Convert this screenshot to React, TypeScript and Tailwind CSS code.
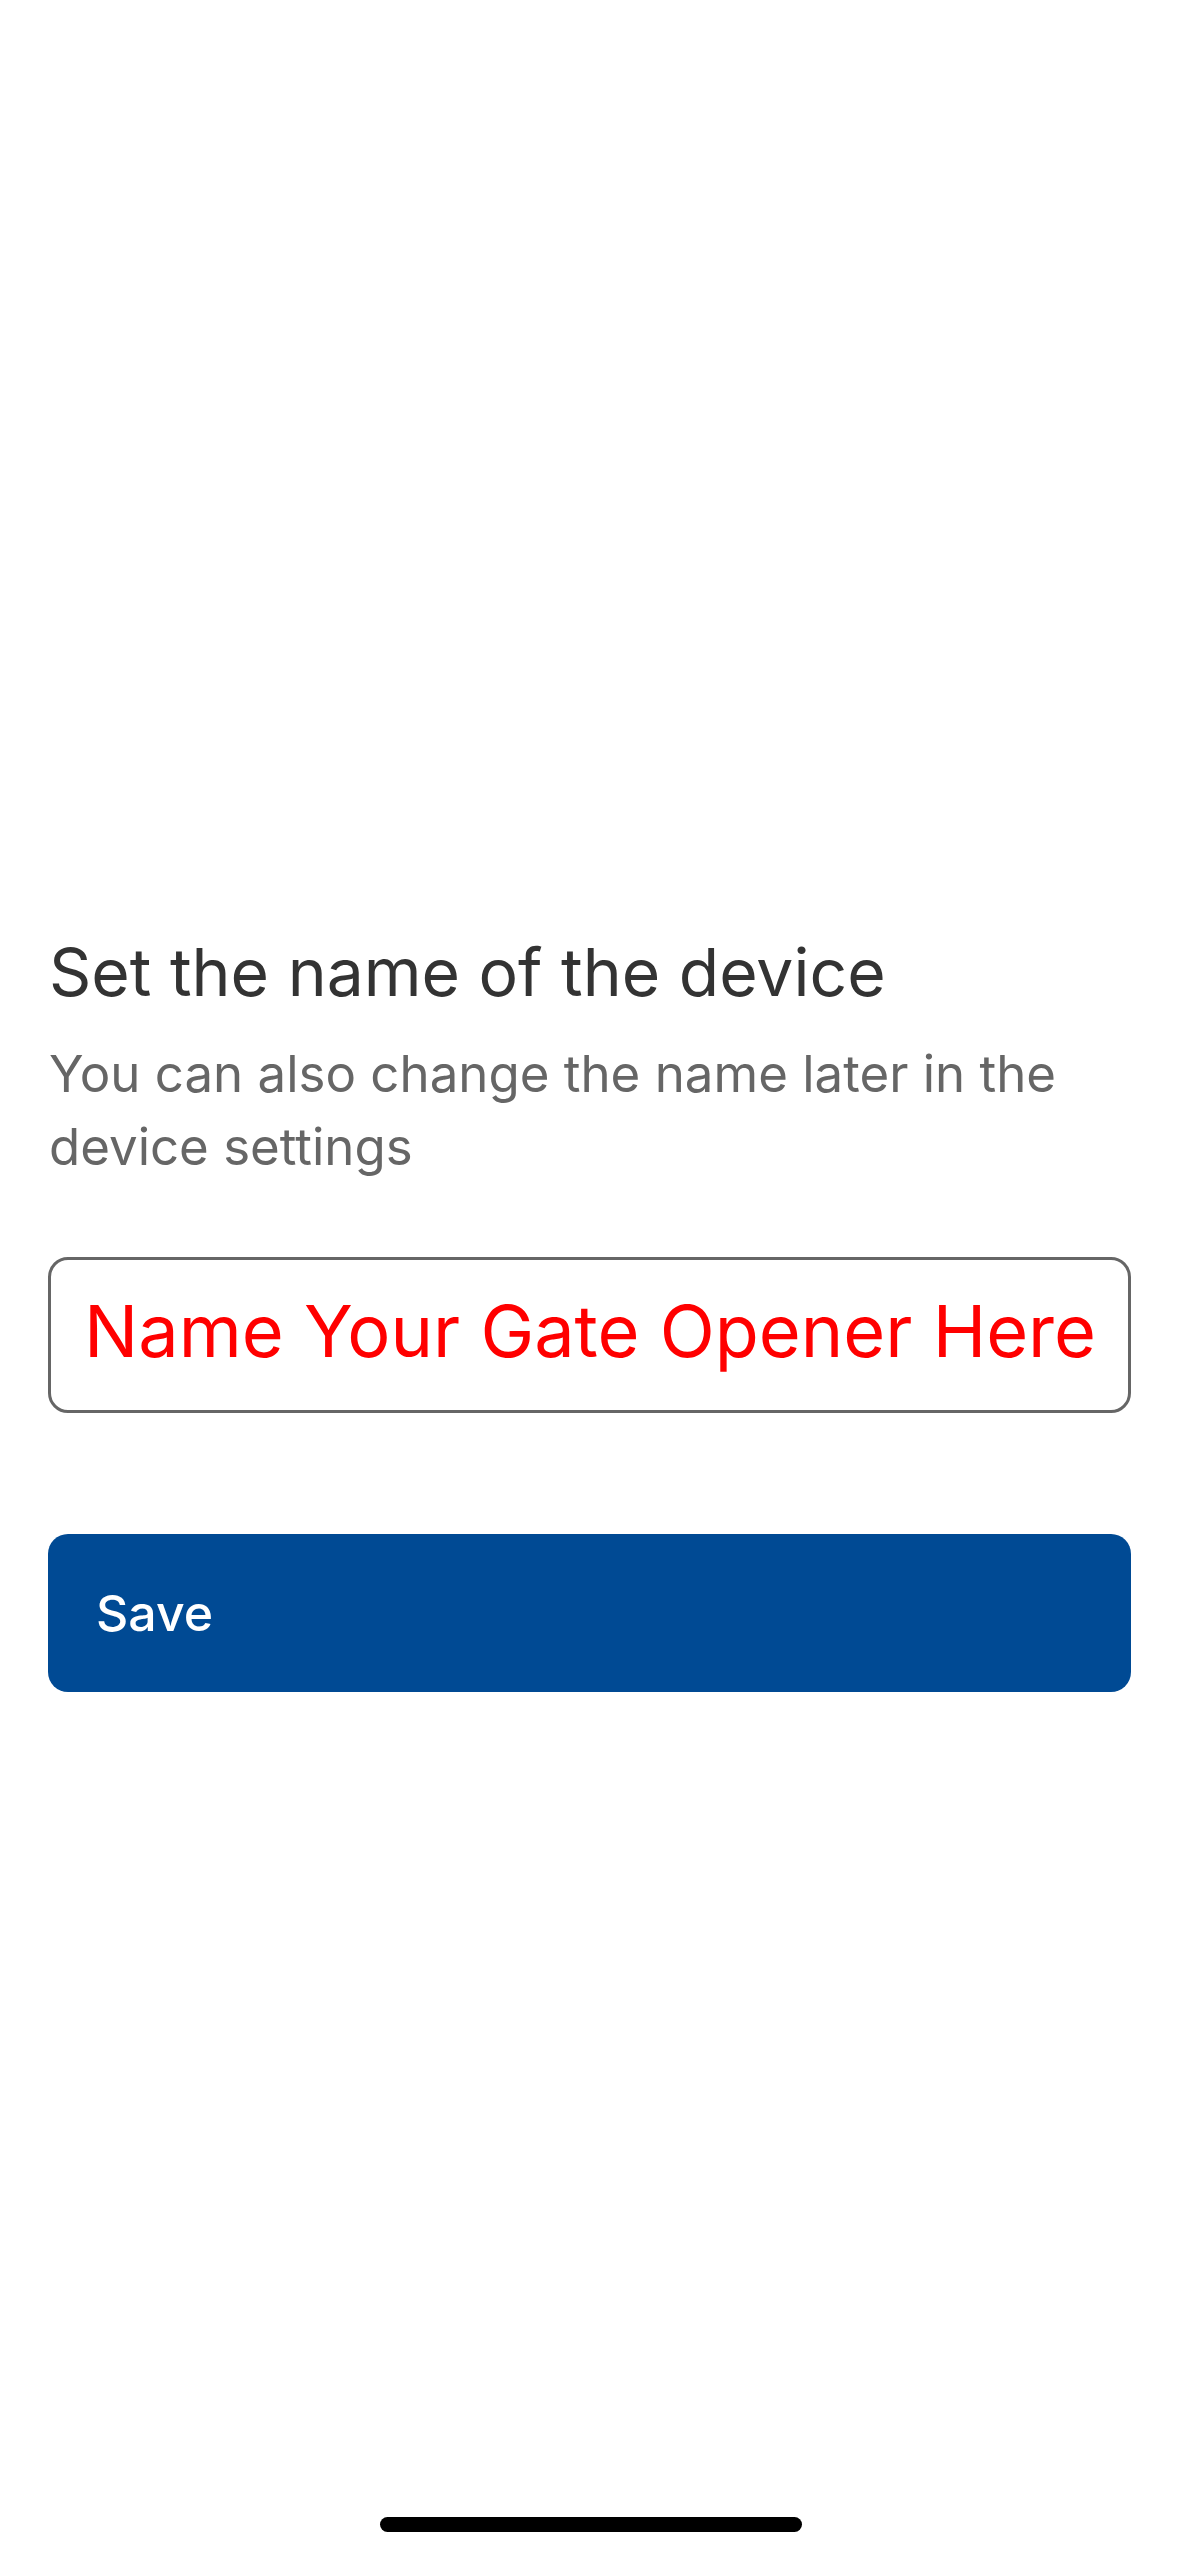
import React from "react";

export default function App() {
  return (
    <div
      className="relative w-[1179px] h-[2556px] bg-white overflow-hidden"
      style={{ fontFamily: "Inter, 'Noto Sans', sans-serif" }}
    >
      <div className="flex flex-col pl-[48px] pr-[48px] pt-[932px]">
        <h1 className="text-[66px] leading-[80px] font-normal text-[#333333] pl-[1px]">
          Set the name of the device
        </h1>
        <p className="mt-[25px] text-[51px] leading-[73px] text-[#666666] pl-[1px]">
          You can also change the name later in the device settings
        </p>
        <div className="mt-[74px] h-[156px] rounded-[20px] border-[3px] border-[#666666] flex items-center pl-[33px]">
          <span className="text-[72px] leading-none text-[#ff0000] whitespace-nowrap -mt-[8px]">
            Name Your Gate Opener Here
          </span>
        </div>
        <button className="mt-[121px] h-[158px] rounded-[20px] bg-[#004a94] flex items-center pl-[48px] text-left">
          <span className="text-[50px] leading-none font-medium text-white">Save</span>
        </button>
      </div>
      <div className="absolute left-[380px] top-[2517px] w-[422px] h-[15px] rounded-full bg-black" />
    </div>
  );
}
